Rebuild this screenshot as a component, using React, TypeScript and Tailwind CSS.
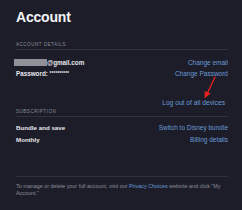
const App = () => {
  return (
    <div className="relative w-[242px] h-[210px] overflow-hidden bg-[#1c1d29] font-['Liberation_Sans',Arial,sans-serif] text-white">
      <div className="pl-[16px] pr-[14px] pt-[9px]">
        <h1 className="text-[14px] leading-[16px] font-bold tracking-[-0.2px] text-[#f3f3f5]">Account</h1>

        <div className="mt-[17px] text-[4.5px] leading-[6px] tracking-[0.12em] text-[#8b8d99]">ACCOUNT DETAILS</div>
        <div className="mt-[1px] h-px bg-[#2f313e]" />

        <div className="mt-[8px] flex items-center justify-between h-[9px]">
          <div className="flex items-center">
            <div className="-ml-[2px] w-[33px] h-[7px] bg-[#8f9098] blur-[0.7px]" />
            <span className="text-[6.3px] font-bold text-[#e8e8ec]">@gmail.com</span>
          </div>
          <span className="text-[6.5px] text-[#6b9bd6]">Change email</span>
        </div>
        <div className="mt-[2px] flex items-center justify-between h-[9px]">
          <span className="text-[6.3px] font-bold text-[#e8e8ec]">
            Password: <span className="text-[5px] align-[1px]">**********</span>
          </span>
          <span className="text-[6.5px] text-[#6b9bd6]">Change Password</span>
        </div>
        <div className="mt-[21px] flex justify-end h-[9px] items-center pr-[3px]">
          <span className="text-[6.7px] text-[#6b9bd6]">Log out of all devices</span>
        </div>

        <div className="mt-[1px] text-[4.5px] leading-[6px] tracking-[0.12em] text-[#8b8d99]">SUBSCRIPTION</div>
        <div className="mt-[1px] h-px bg-[#2f313e]" />

        <div className="mt-[6px] flex items-center justify-between h-[9px]">
          <span className="text-[6.2px] font-bold text-[#e8e8ec]">Bundle and save</span>
          <span className="text-[6.5px] text-[#6b9bd6]">Switch to Disney bundle</span>
        </div>
        <div className="mt-[3px] flex items-center justify-between h-[9px]">
          <span className="text-[6.2px] font-bold text-[#e8e8ec]">Monthly</span>
          <span className="text-[6.5px] text-[#6b9bd6]">Billing details</span>
        </div>

        <div className="mt-[32px] h-px bg-[#2f313e]" />
        <p className="mt-[6px] text-[5.4px] leading-[7px] text-[#8b8d99]">
          To manage or delete your full account, visit our <span className="text-[#6b9bd6]">Privacy Choices</span> website and click "My Account."
        </p>
      </div>

      <svg className="absolute left-0 top-0" width="242" height="210" viewBox="0 0 242 210">
        <line x1="215" y1="77" x2="207.5" y2="93" stroke="#e8231f" strokeWidth="1.3" strokeLinecap="round" />
        <polygon points="204.5,98.5 204.8,91 210.6,93.6" fill="#e8231f" />
      </svg>
    </div>
  );
};

export default App;
